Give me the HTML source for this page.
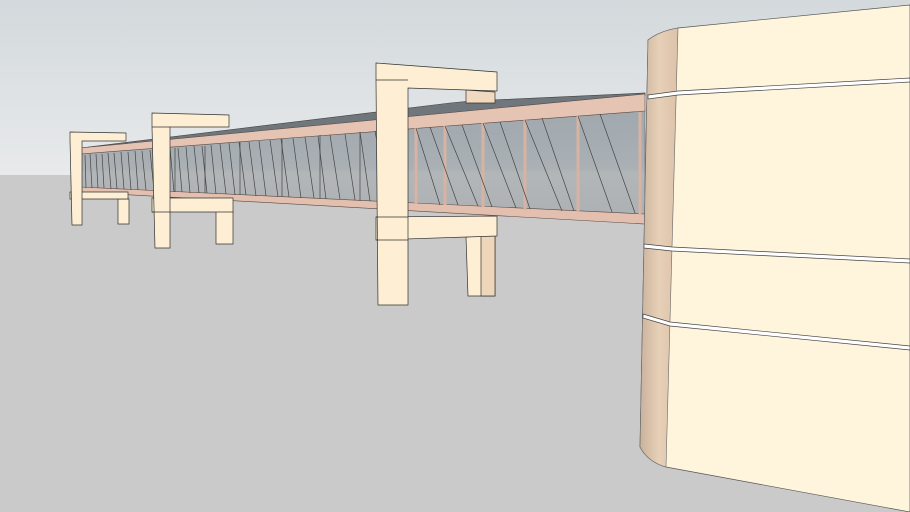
<!DOCTYPE html>
<html><head><style>html,body{margin:0;padding:0;width:910px;height:512px;overflow:hidden}</style></head><body>
<svg width="910" height="512" viewBox="0 0 910 512" xmlns="http://www.w3.org/2000/svg">
<defs>
<linearGradient id="sky" x1="0" y1="0" x2="0" y2="1"><stop offset="0" stop-color="#d3d9dc"/><stop offset="1" stop-color="#e8eaeb"/></linearGradient>
<linearGradient id="curve" x1="0" y1="0" x2="1" y2="0"><stop offset="0" stop-color="#c9b29c"/><stop offset="0.5" stop-color="#e7d0b7"/><stop offset="1" stop-color="#dcc2aa"/></linearGradient>
<linearGradient id="glass" x1="0" y1="0" x2="0" y2="1"><stop offset="0" stop-color="#a0a8ae"/><stop offset="0.55" stop-color="#aab0b4"/><stop offset="0.6" stop-color="#b3b6b8"/><stop offset="1" stop-color="#adb1b3"/></linearGradient>
</defs>
<rect width="910" height="176" fill="url(#sky)"/>
<rect y="175" width="910" height="337" fill="#cacaca"/>
<polygon points="80,148 450,103 470,101 645,93 645,96 80,150" fill="#6f777c" stroke="#444" stroke-width="0.6"/>
<polygon points="80,153 645,110 645,216 80,188" fill="url(#glass)" stroke="#555" stroke-width="0.5"/>
<polygon points="80,148 645,94 645,111 80,154" fill="#e6c4b4" stroke="#5a4a44" stroke-width="0.6"/>
<polygon points="80,187 645,214 645,224 80,192" fill="#e2bfae" stroke="#5a4a44" stroke-width="0.6"/>
<g stroke="#d8b2a2" stroke-width="3">
<line x1="640" y1="112" x2="640" y2="215"/><line x1="578" y1="116" x2="578" y2="212"/><line x1="525" y1="120" x2="525" y2="210"/><line x1="483" y1="123" x2="483" y2="207"/><line x1="445" y1="126" x2="445" y2="205"/><line x1="416" y1="128" x2="416" y2="204"/>
</g>
<g stroke="#444" stroke-width="0.7" fill="none">
<path d="M578,116 L612,212 M525,120 L562,211 M483,123 L516,208 M445,126 L478,206 M416,128 L440,205 M600,114 L635,213 M542,118 L574,211 M500,122 L530,209 M462,125 L492,207 M430,127 L458,205"/>
<path d="M395,130 L408,203 M375,131 L388,202 M360,132 L370,201 M345,134 L355,200 M330,135 L340,199 M318,136 L326,199 M305,137 L314,198 M293,138 L301,198 M281,139 L289,197 M270,140 L278,197 M259,141 L266,196 M249,142 L256,196 M239,142 L246,195 M229,143 L235,195 M220,144 L226,194 M211,145 L216,194 M202,146 L207,193 M194,146 L199,193 M186,147 L190,193 M178,148 L182,192 M170,148 L174,192 M150,150 L154,191 M142,151 L146,190 M135,151 L138,190 M128,152 L131,190 M121,152 L124,189 M114,153 L117,189 M108,153 L111,189 M102,154 L104,188 M96,154 L98,188 M90,154 L92,188 M85,155 L86,188"/>
<path d="M320,135 L320,199 M360,132 L360,201 M240,142 L240,195 M282,139 L282,197 M205,146 L205,193 M175,148 L175,192"/>
</g>
<g fill="#fdeed4" stroke="#333" stroke-width="0.7">
<polygon points="118,199 129,199 129,224 118,224"/>
<polygon points="70,192 128,192 128,199 70,199"/>
<polygon points="70,132 126,133 126,141 82,141 82,225 72,225 70,140"/>
<polygon points="216,211 233,211 233,244 216,244"/>
<polygon points="152,198 233,198 233,212 152,212"/>
<polygon points="152,113 229,115 229,127 170,127 170,248 155,248 152,127"/>
<polygon points="466,90 495,92 495,103 466,103" fill="#f0d9be"/>
<polygon points="466,237 495,235 495,296 468,296" />
<polygon points="481,236 495,235 495,296 481,296" fill="#eed6bb"/>
<polygon points="376,217 497,216 497,236 376,240"/>
<polygon points="376,63 497,72 497,91 408,88 408,305 378,305 376,80"/>
<line x1="376" y1="80" x2="408" y2="80"/><line x1="376" y1="217" x2="408" y2="217"/><line x1="376" y1="240" x2="408" y2="240"/>
<line x1="152" y1="127" x2="170" y2="127"/><line x1="152" y1="212" x2="170" y2="212"/>
</g>
<path d="M678,28 L910,5 L910,512 L666,467 Q648,462 640,447 L648,40 Q660,31 678,28 Z" fill="#fff5dd" stroke="#555" stroke-width="0.7"/>
<path d="M678,28 Q660,31 648,40 L640,447 Q648,462 666,467 Z" fill="url(#curve)" stroke="#666" stroke-width="0.6"/>
<g fill="#fff" stroke="#444" stroke-width="0.7">
<path d="M648,95 L678,91 L910,78 L910,82 L678,95 L648,99 Z"/>
<path d="M644,244 L672,247 L910,259 L910,263 L672,251 L644,248 Z"/>
<path d="M643,314 L670,322 L910,346 L910,350 L670,326 L643,318 Z"/>
</g>
</svg>
</body></html>
